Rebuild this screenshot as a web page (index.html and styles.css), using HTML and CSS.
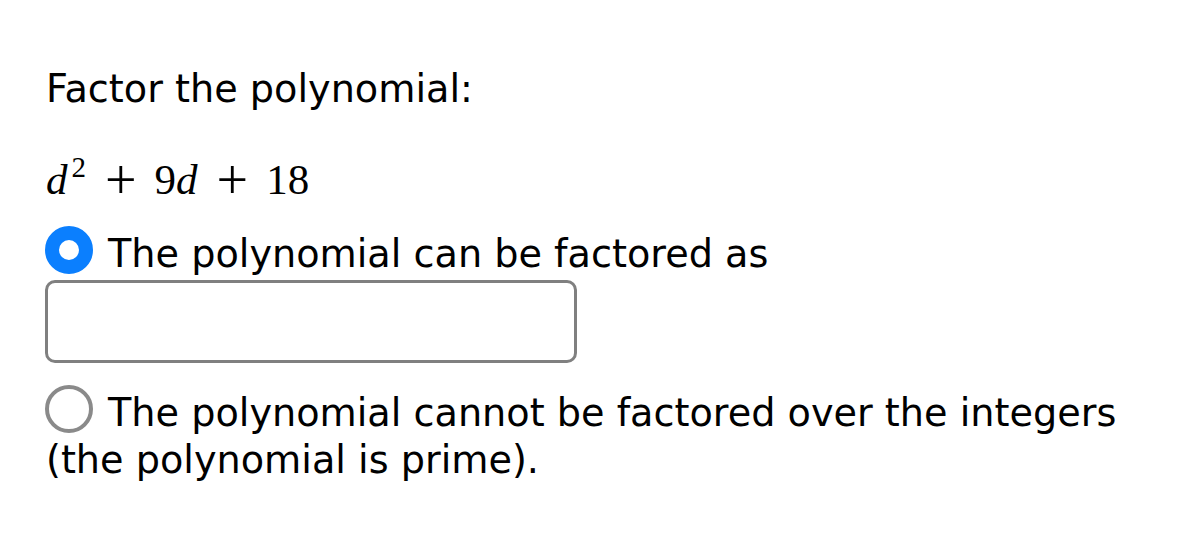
FILE: index.html
```html
<!DOCTYPE html>
<html lang="en">
  <head>
    <meta charset="UTF-8">
    <title>Factor the polynomial</title>
    <link rel="stylesheet" href="styles.css">
  </head>
  <body>
    <div class="pregunta">
        <p class="enunciado">Factor the polynomial:</p>
        <div class="formula">
            <span class="var">d</span><sup>2</sup><span class="op">+</span>9<span class="var">d</span><span class="op">+</span>18
        </div>
        <div class="opcion">
            <span class="radio radio-marcado"></span>The polynomial can be factored as
        </div>
        <div class="respuesta"></div>
        <div class="opcion opcion-ultima">
            <span class="radio"></span>The polynomial cannot be factored over the integers (the polynomial is prime).
        </div>
    </div>
  </body>
</html>
```

FILE: styles.css
```css
html, body {
    margin: 0;
    padding: 0;
    background: #fff;
}

.pregunta {
    padding: 66px 40px 0 46px;
    font-family: "DejaVu Sans", Verdana, sans-serif;
    font-size: 38.2px;
    line-height: 47px;
    color: #000;
}

.enunciado {
    margin: 0;
}

.formula {
    margin-top: 43px;
    font-family: "Liberation Serif", "DejaVu Serif", serif;
    font-size: 43px;
    line-height: 47px;
}

.formula .var {
    font-style: italic;
}

.formula sup {
    font-size: 29px;
    line-height: 0;
    vertical-align: 17px;
    margin-left: 4px;
}

.formula .op {
    font-size: 56px;
    line-height: 0;
    vertical-align: -5px;
    margin: 0 18px 0 19px;
}

.opcion {
    margin-top: 23px;
}

.radio {
    display: inline-block;
    box-sizing: border-box;
    width: 48px;
    height: 48px;
    border: 4px solid #8a8a8a;
    border-radius: 50%;
    vertical-align: -7px;
    margin-right: 15px;
    margin-left: -1px;
}

.radio-marcado {
    border: 14px solid #0b7ffe;
}

.respuesta {
    box-sizing: border-box;
    width: 532px;
    height: 83px;
    margin: 2px 0 0 -1px;
    border: 3px solid #808080;
    border-radius: 10px;
}

.opcion-ultima {
    margin-top: 22px;
}
```
